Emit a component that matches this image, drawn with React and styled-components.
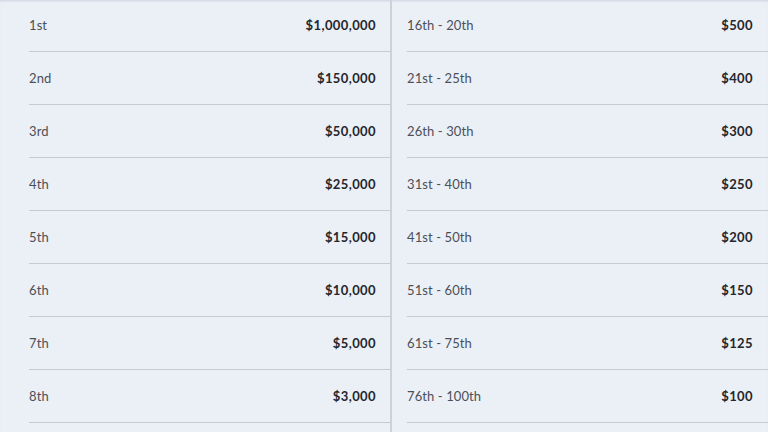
import React from 'react';
import styled, {createGlobalStyle} from 'styled-components';

const GlobalStyle = createGlobalStyle`
  html, body {
    margin: 0;
    padding: 0;
    background: #ebeff6;
    overflow: hidden;
  }
`

const Page = styled.div`
  display: flex;
  flex-direction: column;
  width: 768px;
  height: 432px;
  overflow: hidden;
  background: #ebeff6;
  box-shadow: inset 0 2px 2px -1px rgba(120, 130, 150, 0.25);
  font-family: Lato, "Open Sans", "Liberation Sans", sans-serif;
`

const Table = styled.div`
  flex: 1;
  display: grid;
  grid-template-columns: 362px 1fr;
  padding-left: 29px;
  margin-top: -1px;
`

const Column = styled.div`
  display: flex;
  flex-direction: column;
  border-left: ${p => p.$divided ? '2px solid #cdd1d9' : 'none'};
  padding-left: ${p => p.$divided ? '15px' : '0'};
  margin-left: ${p => p.$divided ? '-1px' : '0'};
`

const Row = styled.div`
  display: flex;
  align-items: center;
  justify-content: space-between;
  height: 52px;
  padding-right: 15px;
  border-bottom: 1px solid #c6cbd3;
`

const Place = styled.span`
  font-size: 13px;
  color: #4b5058;
  letter-spacing: 0.1px;
`

const Prize = styled.span`
  font-size: 13px;
  font-weight: 700;
  color: #23262c;
  letter-spacing: 0.4px;
`

const left = [
  ['1st', '$1,000,000'],
  ['2nd', '$150,000'],
  ['3rd', '$50,000'],
  ['4th', '$25,000'],
  ['5th', '$15,000'],
  ['6th', '$10,000'],
  ['7th', '$5,000'],
  ['8th', '$3,000'],
]

const right = [
  ['16th - 20th', '$500'],
  ['21st - 25th', '$400'],
  ['26th - 30th', '$300'],
  ['31st - 40th', '$250'],
  ['41st - 50th', '$200'],
  ['51st - 60th', '$150'],
  ['61st - 75th', '$125'],
  ['76th - 100th', '$100'],
]

function PayoutColumn({rows, divided}) {
  return (
    <Column $divided={divided}>
      {rows.map(([place, prize]) => (
        <Row key={place}>
          <Place>{place}</Place>
          <Prize>{prize}</Prize>
        </Row>
      ))}
    </Column>
  )
}

export default function App() {
  return (
    <Page>
      <GlobalStyle/>
      <Table>
        <PayoutColumn rows={left}/>
        <PayoutColumn rows={right} divided/>
      </Table>
    </Page>
  )
}
